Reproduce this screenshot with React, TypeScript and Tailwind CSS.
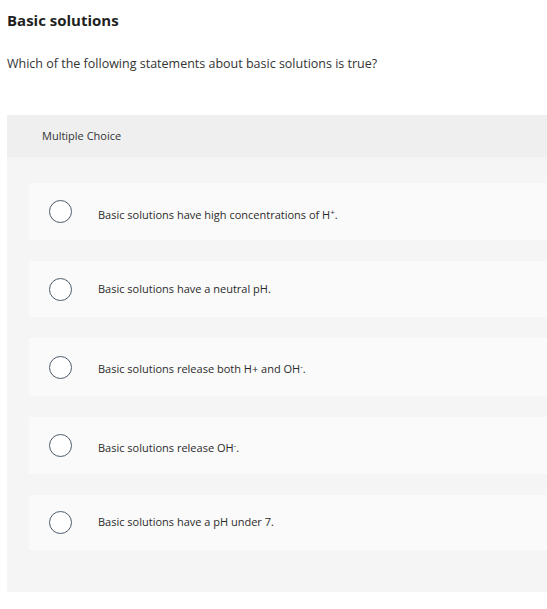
import React from "react";

type Choice = {
    id: number;
    text: React.ReactNode;
    height: string;
    nudge: string;
};

const choices: Choice[] = [
    {
        id: 1,
        text: (
            <>
                Basic solutions have high concentrations of H<sup className="text-[8px]">+</sup>.
            </>
        ),
        height: "h-[57px]",
        nudge: "mt-[7px]",
    },
    { id: 2, text: "Basic solutions have a neutral pH.", height: "h-[56px]", nudge: "" },
    {
        id: 3,
        text: (
            <>
                Basic solutions release both H+ and OH<sup className="text-[8px]">-</sup>.
            </>
        ),
        height: "h-[58px]",
        nudge: "mt-[4px]",
    },
    {
        id: 4,
        text: (
            <>
                Basic solutions release OH<sup className="text-[8px]">-</sup>.
            </>
        ),
        height: "h-[57px]",
        nudge: "mt-[6px]",
    },
    { id: 5, text: "Basic solutions have a pH under 7.", height: "h-[55px]", nudge: "" },
];

const ChoiceRow = ({ choice }: { choice: Choice }) => {
    return (
        <div className={`flex items-center bg-[#fafafa] ${choice.height}`}>
            <span className="ml-[20px] w-[23px] h-[23px] rounded-full border-[1.5px] border-[#4b5b6b] bg-white shrink-0" />
            <span className={`ml-[26px] text-[11px] text-[#2b2b2b] ${choice.nudge}`}>{choice.text}</span>
        </div>
    );
};

const App = () => {
    return (
        <div className="w-[547px] h-[609px] bg-white font-['Open_Sans',sans-serif] text-[#1f1f1f] overflow-hidden">
            <h1 className="pl-[7px] pt-[10px] text-[15px] font-bold leading-[20px]">Basic solutions</h1>
            <p className="pl-[7px] mt-[26px] text-[12.5px] leading-[16px] text-[#333]">
                Which of the following statements about basic solutions is true?
            </p>

            <div className="ml-[7px] mt-[43px] bg-[#f5f5f5] h-[477px]">
                <div className="h-[42px] bg-[#efefef] flex items-center pl-[35px] text-[11px] text-[#333]">
                    Multiple Choice
                </div>
                <div className="pl-[22px] pt-[26px] flex flex-col gap-[21px]">
                    {choices.map((c) => (
                        <ChoiceRow key={c.id} choice={c} />
                    ))}
                </div>
            </div>
        </div>
    );
};

export default App;
